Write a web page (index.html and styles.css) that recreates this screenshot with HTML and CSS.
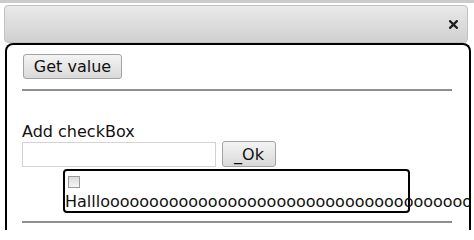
FILE: index.html
```html
<!DOCTYPE html>
<html>
<head>
<meta charset="utf-8">
<link rel="stylesheet" href="styles.css">
</head>
<body>
<div class="strip"></div>
<div class="titlebar">
  <span class="close" title="close">
    <svg width="9" height="9" viewBox="0 0 9 9"><path d="M1.2 1.2 L7.8 7.8 M7.8 1.2 L1.2 7.8" stroke="#1e1e1e" stroke-width="2.3" stroke-linecap="square"/></svg>
  </span>
</div>
<div class="content">
  <button class="btn btn-get">Get value</button>
  <div class="rule rule-top"></div>
  <div class="label">Add checkBox</div>
  <div class="addrow">
    <input class="field" type="text">
    <button class="btn btn-ok">_Ok</button>
  </div>
  <div class="checkgroup">
    <div class="checkline"><span class="check"></span></div>
    <div class="checktext">Halllooooooooooooooooooooooooooooooooooooooooooooooooooo</div>
  </div>
  <div class="rule rule-bottom"></div>
</div>
</body>
</html>
```
FILE: styles.css
```css
html, body {
  margin: 0;
  padding: 0;
  background: #ffffff;
  height: 230px;
  overflow: hidden;
}
body {
  font-family: "DejaVu Sans", Verdana, sans-serif;
  font-size: 16px;
  line-height: 19px;
  color: #111;
}
.strip {
  height: 3px;
  background: #cbcbcb;
  margin-bottom: 2px;
}
.titlebar {
  margin: 0 6px 0 4px;
  height: 36px;
  border: 1px solid #c2c2c2;
  border-radius: 4px;
  background: linear-gradient(#e9e9e9, #d0d0d0);
  display: flex;
  align-items: center;
  justify-content: flex-end;
  padding-right: 9px;
}
.close {
  display: flex;
  margin-top: 1px;
}
.content {
  margin: 0 3px 0 5px;
  border: 2px solid #000;
  border-bottom: none;
  border-radius: 8px 8px 0 0;
  padding: 9px 0 0 15px;
  height: 176px;
  overflow: hidden;
}
.btn {
  font-family: "DejaVu Sans", Verdana, sans-serif;
  font-size: 16px;
  color: #111;
  height: 25px;
  border: 1px solid #a3a3a3;
  border-radius: 3px;
  background: linear-gradient(#f4f4f4, #d9d9d9);
  padding: 0;
  margin: 0;
  line-height: 21px;
  display: block;
  white-space: nowrap;
  text-align: center;
}
.btn-get {
  margin-left: 1px;
  width: 99px;
}
.rule {
  height: 0;
  border-top: 2px solid #8e8e8e;
  width: 430px;
}
.rule-top {
  margin-top: 10px;
}
.label {
  margin-top: 31px;
  height: 19px;
}
.addrow {
  display: flex;
  align-items: flex-end;
  gap: 6px;
}
.field {
  box-sizing: border-box;
  width: 194px;
  height: 25px;
  margin: 0;
  border: 1px solid #d3d3d3;
  background: #fff;
}
.btn-ok {
  width: 54px;
  height: 26px;
}
.checkgroup {
  margin: 2px 0 0 41px;
  width: 343px;
  height: 40px;
  border: 2px solid #000;
  border-radius: 4px;
  white-space: nowrap;
}
.checkline {
  height: 21px;
  display: flex;
  align-items: flex-start;
}
.check {
  box-sizing: border-box;
  width: 12px;
  height: 12px;
  margin: 5px 0 0 3px;
  border: 1px solid #9a9a9a;
  background: linear-gradient(#dcdcdc, #f6f6f6);
}
.checktext {
  height: 19px;
}
.rule-bottom {
  margin-top: 8px;
}
```
